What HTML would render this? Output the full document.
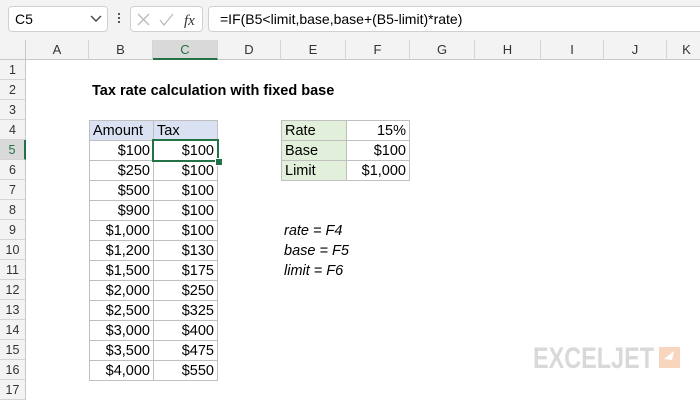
<!DOCTYPE html><html><head><style>
body{margin:0;width:700px;height:400px;overflow:hidden;background:#fff;font-family:"Liberation Sans",Calibri,sans-serif;position:relative}
.a{position:absolute}
.t{font-size:14.5px;color:#000;line-height:20px;white-space:nowrap}
.ch{position:absolute;top:40px;height:20px;background:#f3f3f3;border-right:1px solid #d4d4d4;border-bottom:1px solid #c8c8c8;box-sizing:border-box;text-align:center;font-size:13px;line-height:20px;color:#333}
.rh{position:absolute;left:0;width:26px;height:20px;background:#f3f3f3;border-bottom:1px solid #d4d4d4;border-right:1px solid #c8c8c8;box-sizing:border-box;text-align:center;font-size:12.5px;line-height:20px;color:#333}
.c{position:absolute;height:21px;box-sizing:border-box;border:1px solid #bfbfbf;font-size:14.5px;line-height:20px;padding:0 3px;white-space:nowrap}
.r{text-align:right}
</style></head><body>
<div class="a" style="left:0;top:0;width:700px;height:40px;background:#f3f3f3"></div>
<div class="a" style="left:8px;top:6px;width:100px;height:26px;background:#fff;border:1px solid #d0d0d0;border-radius:4px;box-sizing:border-box"></div>
<div class="a t" style="left:15px;top:9px;font-size:14px">C5</div>
<svg class="a" style="left:90px;top:15px" width="12" height="8"><path d="M1 1l5 5 5-5" fill="none" stroke="#444" stroke-width="1.4"/></svg>
<div class="a" style="left:118px;top:13px;width:2px;height:2px;background:#555;box-shadow:0 4px #555,0 8px #555"></div>
<div class="a" style="left:130px;top:6px;width:73px;height:26px;background:#fff;border:1px solid #d0d0d0;border-radius:4px;box-sizing:border-box"></div>
<svg class="a" style="left:136px;top:12px" width="70" height="16"><path d="M2 2l11 11M13 2L2 13" stroke="#bbb" stroke-width="1.3"/><path d="M24 8l4 5 9-11" fill="none" stroke="#bbb" stroke-width="1.3"/><text x="48" y="13" font-family="Liberation Serif" font-style="italic" font-size="15" fill="#333">fx</text></svg>
<div class="a" style="left:208px;top:6px;width:500px;height:26px;background:#fff;border:1px solid #d0d0d0;border-radius:4px;box-sizing:border-box"></div>
<div class="a t" style="left:220px;top:9px;font-size:14px">=IF(B5&lt;limit,base,base+(B5-limit)*rate)</div>
<div class="a" style="left:0;top:40px;width:26px;height:20px;background:#f3f3f3;border-right:1px solid #c8c8c8;border-bottom:1px solid #c8c8c8;box-sizing:border-box"></div>
<div class="ch" style="left:26px;width:63px">A</div>
<div class="ch" style="left:89px;width:64px">B</div>
<div class="ch" style="left:153px;width:65px;background:#d9d9d9;border-bottom:2px solid #217346;color:#217346">C</div>
<div class="ch" style="left:218px;width:63px">D</div>
<div class="ch" style="left:281px;width:65px">E</div>
<div class="ch" style="left:346px;width:64px">F</div>
<div class="ch" style="left:410px;width:65px">G</div>
<div class="ch" style="left:475px;width:66px">H</div>
<div class="ch" style="left:541px;width:63px">I</div>
<div class="ch" style="left:604px;width:63px">J</div>
<div class="ch" style="left:667px;width:40px">K</div>
<div class="rh" style="top:60px">1</div><div class="rh" style="top:80px">2</div><div class="rh" style="top:100px">3</div><div class="rh" style="top:120px">4</div>
<div class="rh" style="top:140px;background:#d9d9d9;border-right:2px solid #217346;color:#217346">5</div>
<div class="rh" style="top:160px">6</div><div class="rh" style="top:180px">7</div><div class="rh" style="top:200px">8</div><div class="rh" style="top:220px">9</div><div class="rh" style="top:240px">10</div><div class="rh" style="top:260px">11</div><div class="rh" style="top:280px">12</div><div class="rh" style="top:300px">13</div><div class="rh" style="top:320px">14</div><div class="rh" style="top:340px">15</div><div class="rh" style="top:360px">16</div><div class="rh" style="top:380px">17</div>
<div class="a t" style="left:92px;top:81px;font-weight:bold;font-size:14.5px">Tax rate calculation with fixed base</div>
<div class="c" style="left:89px;top:120px;width:65px;background:#d9e1f2">Amount</div>
<div class="c" style="left:153px;top:120px;width:65px;background:#d9e1f2">Tax</div>
<div id="rows"></div>
<div class="c" style="left:281px;top:120px;width:66px;background:#e2efda">Rate</div><div class="c r" style="left:346px;top:120px;width:64px">15%</div>
<div class="c" style="left:281px;top:140px;width:66px;background:#e2efda">Base</div><div class="c r" style="left:346px;top:140px;width:64px">$100</div>
<div class="c" style="left:281px;top:160px;width:66px;background:#e2efda">Limit</div><div class="c r" style="left:346px;top:160px;width:64px">$1,000</div>
<div class="a t" style="left:284px;top:221px;font-style:italic">rate = F4</div>
<div class="a t" style="left:284px;top:241px;font-style:italic">base = F5</div>
<div class="a t" style="left:284px;top:261px;font-style:italic">limit = F6</div>
<script>
var d=[["$100","$100"],["$250","$100"],["$500","$100"],["$900","$100"],["$1,000","$100"],["$1,200","$130"],["$1,500","$175"],["$2,000","$250"],["$2,500","$325"],["$3,000","$400"],["$3,500","$475"],["$4,000","$550"]],h="";
d.forEach(function(r,i){var y=140+i*20;h+='<div class="c r" style="left:89px;top:'+y+'px;width:65px">'+r[0]+'</div><div class="c r" style="left:153px;top:'+y+'px;width:65px">'+r[1]+'</div>';});
document.getElementById("rows").outerHTML=h;
</script>
<div class="a" style="left:152px;top:139px;width:67px;height:23px;border:2px solid #217346;box-sizing:border-box"></div>
<div class="a" style="left:215px;top:158px;width:6px;height:6px;background:#217346;border:1px solid #fff"></div>
<svg class="a" style="left:530px;top:340px" width="155" height="35"><text x="3" y="28" font-family="Liberation Sans" font-weight="bold" font-size="30" fill="#d9d9d9" textLength="121" lengthAdjust="spacingAndGlyphs">EXCELJET</text><rect x="129" y="7" width="21" height="21" fill="#f8d6bd"/><path d="M144 11L134 19l8 1z" fill="#fff"/></svg>
</body></html>
